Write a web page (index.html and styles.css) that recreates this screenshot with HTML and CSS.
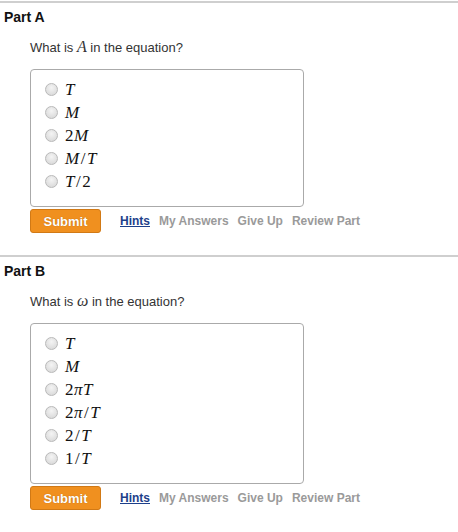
FILE: index.html
```html
<!DOCTYPE html>
<html lang="en">
<head>
    <meta charset="UTF-8">
    <meta name="viewport" content="width=device-width, initial-scale=1.0">
    <title>Parts</title>
    <link rel="stylesheet" href="styles.css">
</head>
<body>
    <div class="page">
        <div class="part">
            <h2>Part A</h2>
            <div class="question">What is <i class="var">A</i> in the equation?</div>
            <div class="choices">
                <label class="choice"><input type="radio" name="a"><span class="math"><i>T</i></span></label>
                <label class="choice"><input type="radio" name="a"><span class="math"><i>M</i></span></label>
                <label class="choice"><input type="radio" name="a"><span class="math">2<i>M</i></span></label>
                <label class="choice"><input type="radio" name="a"><span class="math"><i>M</i><span class="op">/</span><i>T</i></span></label>
                <label class="choice"><input type="radio" name="a"><span class="math"><i>T</i><span class="op">/</span>2</span></label>
            </div>
            <div class="actions">
                <button class="submit">Submit</button>
                <a class="link hints" href="#">Hints</a>
                <span class="link">My Answers</span>
                <span class="link">Give Up</span>
                <span class="link">Review Part</span>
            </div>
        </div>
        <div class="part">
            <h2>Part B</h2>
            <div class="question">What is <i class="var">ω</i> in the equation?</div>
            <div class="choices">
                <label class="choice"><input type="radio" name="b"><span class="math"><i>T</i></span></label>
                <label class="choice"><input type="radio" name="b"><span class="math"><i>M</i></span></label>
                <label class="choice"><input type="radio" name="b"><span class="math">2<i>πT</i></span></label>
                <label class="choice"><input type="radio" name="b"><span class="math">2<i>π</i><span class="op">/</span><i>T</i></span></label>
                <label class="choice"><input type="radio" name="b"><span class="math">2<span class="op">/</span><i>T</i></span></label>
                <label class="choice"><input type="radio" name="b"><span class="math">1<span class="op">/</span><i>T</i></span></label>
            </div>
            <div class="actions">
                <button class="submit">Submit</button>
                <a class="link hints" href="#">Hints</a>
                <span class="link">My Answers</span>
                <span class="link">Give Up</span>
                <span class="link">Review Part</span>
            </div>
        </div>
    </div>
</body>
</html>
```

FILE: styles.css
```css
body{
    margin: 0;
    font-family: "Liberation Sans", Arial, sans-serif;
    font-size: 12px;
    color: #333;
    background: #fff;
}
.page{
    padding-top: 1px;
}
.part{
    border-top: 2px solid #cfcfcf;
    margin-bottom: 22px;
}
h2{
    margin: 6px 0 0 4px;
    font-size: 14px;
    line-height: 16px;
    color: #111;
}
.question{
    margin: 14px 0 0 30px;
    font-size: 13px;
    line-height: 16px;
}
.var{
    font-family: "Liberation Serif", serif;
    font-size: 16px;
}
.choices{
    display: flex;
    flex-direction: column;
    width: 272px;
    margin: 13px 0 0 30px;
    padding: 8px 0 13px;
    border: 1px solid #aaa;
    border-radius: 4px;
}
.choice{
    display: flex;
    align-items: center;
    height: 23px;
    padding-left: 14px;
}
.choice input{
    appearance: none;
    -webkit-appearance: none;
    width: 13px;
    height: 13px;
    margin: 0 7px 0 0;
    border: 1px solid #b9b9b9;
    border-radius: 50%;
    background: radial-gradient(circle at 50% 35%, #f4f4f4, #d4d4d4);
}
.math{
    font-family: "Liberation Serif", serif;
    font-size: 17px;
    letter-spacing: 0.5px;
    color: #111;
}
.op{
    margin: 0 1px;
}
.actions{
    display: flex;
    align-items: center;
    margin: 2px 0 0 30px;
}
.submit{
    width: 71px;
    height: 24px;
    margin-right: 19px;
    padding: 0;
    border: 1px solid #d17915;
    border-radius: 3px;
    background: #f0901f;
    color: #fff;
    font-family: "Liberation Sans", Arial, sans-serif;
    font-size: 13px;
    font-weight: bold;
    text-shadow: 0 0 1px #a85a00;
}
.link{
    margin-right: 9px;
    font-weight: bold;
    color: #9a9a9a;
}
.hints{
    color: #1d3f8a;
    text-decoration: underline;
}
```
